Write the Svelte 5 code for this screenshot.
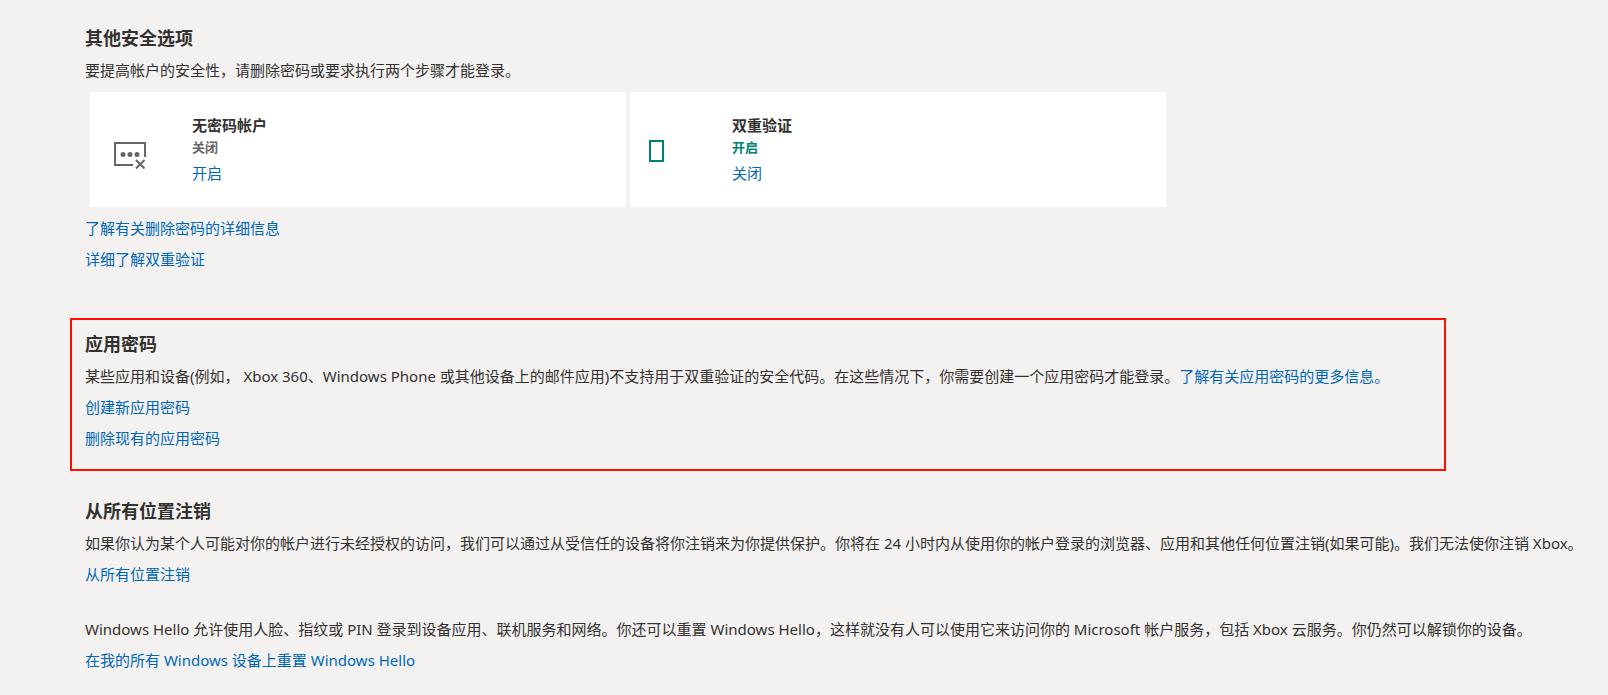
<script lang="ts">
  type Option = {
    icon: 'password' | 'device';
    title: string;
    status: string;
    enabled: boolean;
    action: string;
  };

  const options: Option[] = [
    { icon: 'password', title: '无密码帐户', status: '关闭', enabled: false, action: '开启' },
    { icon: 'device', title: '双重验证', status: '开启', enabled: true, action: '关闭' }
  ];
</script>

<main class="security" lang="zh-CN">
  <section class="section">
    <h2>其他安全选项</h2>
    <p>要提高帐户的安全性，请删除密码或要求执行两个步骤才能登录。</p>

    <div class="cards">
      {#each options as option}
        <article class="card">
          <div class="card-icon">
            {#if option.icon === 'password'}
              <svg viewBox="0 0 38 32" width="38" height="32" fill="none" aria-hidden="true">
                <path d="M25 27H7V5h30v14" stroke="#666" stroke-width="2" />
                <g fill="#666">
                  <circle cx="15" cy="16.5" r="2.5" />
                  <circle cx="22" cy="16.5" r="2.5" />
                  <circle cx="29" cy="16.5" r="2.5" />
                </g>
                <path d="M28 22l8.5 8.5M36.5 22L28 30.5" stroke="#666" stroke-width="2" />
              </svg>
            {:else}
              <svg viewBox="0 0 38 32" width="38" height="32" fill="none" aria-hidden="true">
                <path d="M2 3h13v20H2z" stroke="#008272" stroke-width="2" />
              </svg>
            {/if}
          </div>
          <div class="card-body">
            <h3>{option.title}</h3>
            <span class="status" class:enabled={option.enabled}>{option.status}</span>
            <a href="#toggle">{option.action}</a>
          </div>
        </article>
      {/each}
    </div>

    <a href="#passwordless">了解有关删除密码的详细信息</a>
    <a href="#two-step">详细了解双重验证</a>
  </section>

  <section class="section highlighted">
    <h2>应用密码</h2>
    <p>
      某些应用和设备(例如， Xbox 360、Windows Phone 或其他设备上的邮件应用)不支持用于双重验证的安全代码。在这些情况下，你需要创建一个应用密码才能登录。<a href="#app-passwords">了解有关应用密码的更多信息。</a>
    </p>
    <a href="#create">创建新应用密码</a>
    <a href="#remove">删除现有的应用密码</a>
  </section>

  <section class="section">
    <h2>从所有位置注销</h2>
    <p>
      如果你认为某个人可能对你的帐户进行未经授权的访问，我们可以通过从受信任的设备将你注销来为你提供保护。你将在 24 小时内从使用你的帐户登录的浏览器、应用和其他任何位置注销(如果可能)。我们无法使你注销 Xbox。
    </p>
    <a href="#sign-out">从所有位置注销</a>
  </section>

  <section class="section hello">
    <p>
      Windows Hello 允许使用人脸、指纹或 PIN 登录到设备应用、联机服务和网络。你还可以重置 Windows Hello，这样就没有人可以使用它来访问你的 Microsoft 帐户服务，包括 Xbox 云服务。你仍然可以解锁你的设备。
    </p>
    <a href="#reset-hello">在我的所有 Windows 设备上重置 Windows Hello</a>
  </section>
</main>

<style>
  :global(body) {
    margin: 0;
    background: #f3f2f1;
  }

  .security {
    padding: 26px 0 23px 70px;
    color: #323130;
    font-family: 'Noto Sans', 'Noto Sans CJK SC', sans-serif;
    font-size: 15px;
    line-height: 21px;
  }

  .section {
    display: flex;
    flex-direction: column;
    align-items: flex-start;
    gap: 10px;
    padding: 0 15px;
  }

  .highlighted {
    margin: 48px 162px 28px 0;
    padding: 12px 13px 20px;
    border: 2px solid #ff1000;
  }

  .hello {
    margin-top: 34px;
  }

  h2,
  h3,
  p {
    margin: 0;
  }

  h2 {
    font-size: 18px;
    line-height: 24px;
    font-weight: 700;
  }

  h3 {
    font-size: 15px;
    line-height: 21px;
    font-weight: 700;
  }

  a {
    color: #0067b8;
    text-decoration: none;
  }

  a:hover {
    text-decoration: underline;
  }

  .cards {
    display: grid;
    grid-template-columns: 1fr 1fr;
    gap: 4px;
    width: 100%;
    max-width: 1076px;
    margin: 1px 0 1px 5px;
  }

  .card {
    display: flex;
    background: #fff;
  }

  .card-icon {
    box-sizing: border-box;
    flex: 0 0 102px;
    padding: 46px 0 0 18px;
  }

  .card-icon svg {
    display: block;
  }

  .card-body {
    display: flex;
    flex-direction: column;
    align-items: flex-start;
    padding: 23px 0;
  }

  .status {
    margin: 1px 0 6px;
    color: #666;
    font-size: 13px;
    line-height: 20px;
    font-weight: 600;
  }

  .status.enabled {
    color: #008272;
  }
</style>
